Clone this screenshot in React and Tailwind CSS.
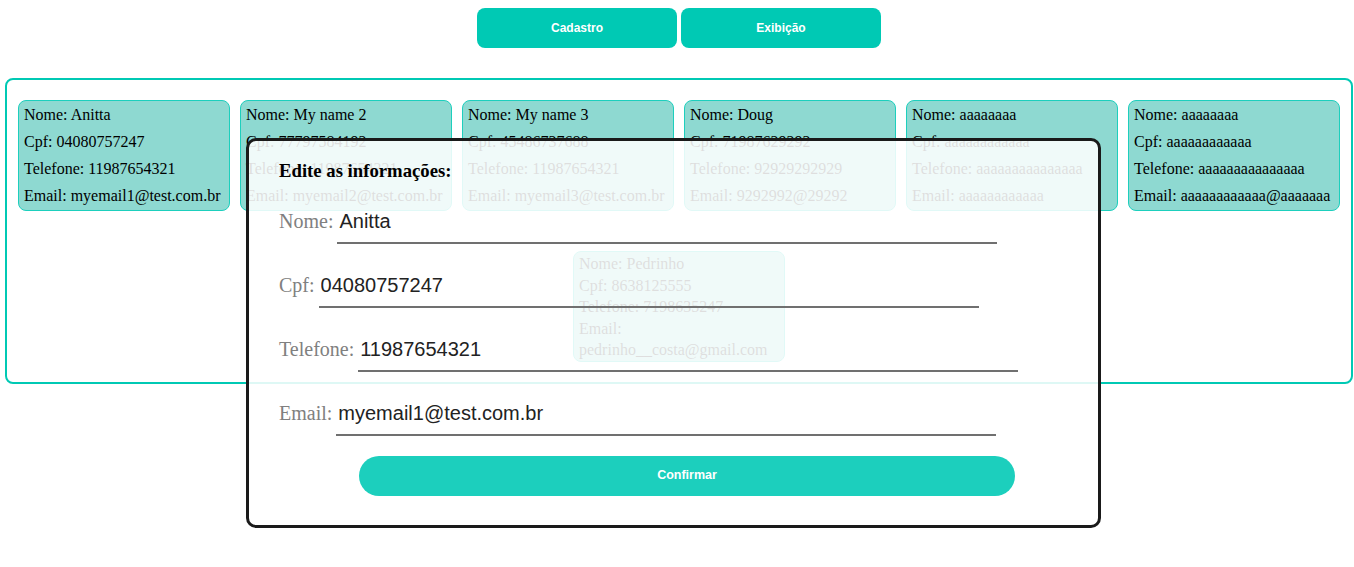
import React from 'react';

const people = [
  { nome: 'Anitta', cpf: '04080757247', telefone: '11987654321', email: 'myemail1@test.com.br' },
  { nome: 'My name 2', cpf: '77797584192', telefone: '11987654321', email: 'myemail2@test.com.br' },
  { nome: 'My name 3', cpf: '45486737688', telefone: '11987654321', email: 'myemail3@test.com.br' },
  { nome: 'Doug', cpf: '71987629292', telefone: '92929292929', email: '9292992@29292' },
  { nome: 'aaaaaaaa', cpf: 'aaaaaaaaaaaa', telefone: 'aaaaaaaaaaaaaaa', email: 'aaaaaaaaaaaa' },
  { nome: 'aaaaaaaa', cpf: 'aaaaaaaaaaaa', telefone: 'aaaaaaaaaaaaaaa', email: 'aaaaaaaaaaaa@aaaaaaa' },
  { nome: 'Pedrinho', cpf: '8638125555', telefone: '7198635247', email: 'pedrinho__costa@gmail.com' },
];

const Card = ({ p }) => (
  <div className="w-[212px] h-[111px] mx-[5px] my-[20px] px-[5px] pt-[1px] flex flex-col justify-around bg-[#8ed9d1] border border-[#1dcfbd] rounded-[8px] text-[16px] leading-[20.5px] text-black">
    <p>Nome: {p.nome}</p>
    <p>Cpf: {p.cpf}</p>
    <p>Telefone: {p.telefone}</p>
    <p>Email: {p.email}</p>
  </div>
);

const Field = ({ label, value, first }) => (
  <div className={`flex items-baseline ${first ? 'mt-[28px]' : 'mt-[30px]'}`}>
    <span className="text-[20px] leading-[23px] text-[#808080] font-['Liberation_Serif','Times_New_Roman',serif]">{label}</span>
    <input
      readOnly
      defaultValue={value}
      className="ml-[4px] w-[660px] pt-0 pb-[9px] px-[2px] leading-[23px] text-[20px] font-['Liberation_Sans',Arial,sans-serif] text-[#222] border-b-2 border-[#707070] bg-transparent outline-none"
    />
  </div>
);

export default function App() {
  const modal = people[0];

  return (
    <div className="relative min-h-[567px] bg-white font-['Liberation_Serif','Times_New_Roman',serif]">
      {/* abas do topo */}
      <div className="flex justify-center gap-[4px] pt-[8px] pl-[4px]">
        <button className="w-[200px] h-[40px] rounded-[8px] bg-[#00c9b4] text-white text-[12px] font-bold font-['Liberation_Sans',Arial,sans-serif]">
          Cadastro
        </button>
        <button className="w-[200px] h-[40px] rounded-[8px] bg-[#00c9b4] text-white text-[12px] font-bold font-['Liberation_Sans',Arial,sans-serif]">
          Exibição
        </button>
      </div>

      {/* lista de cadastros */}
      <div className="mt-[30px] ml-[5px] mr-[1px] border-2 border-[#00c9b4] rounded-[8px] flex flex-wrap justify-center">
        {people.map((p, i) => (
          <Card key={i} p={p} />
        ))}
      </div>

      {/* modal de edição */}
      <div className="absolute left-[246px] top-[138px] w-[855px] h-[390px] border-[3px] border-[#1a1a1a] rounded-[10px] bg-white/[0.87] pl-[30px] pt-[19px]">
        <h3 className="text-[18.72px] font-bold leading-[21.5px] text-black font-['Liberation_Serif','Times_New_Roman',serif]">
          Edite as informações:
        </h3>
        <Field first label="Nome:" value={modal.nome} />
        <Field label="Cpf:" value={modal.cpf} />
        <Field label="Telefone:" value={modal.telefone} />
        <Field label="Email:" value={modal.email} />
        <button className="mt-[20px] ml-[80px] w-[656px] h-[40px] rounded-full bg-[#1ccfbd] text-white text-[12.5px] font-bold font-['Liberation_Sans',Arial,sans-serif]">
          Confirmar
        </button>
      </div>
    </div>
  );
}
